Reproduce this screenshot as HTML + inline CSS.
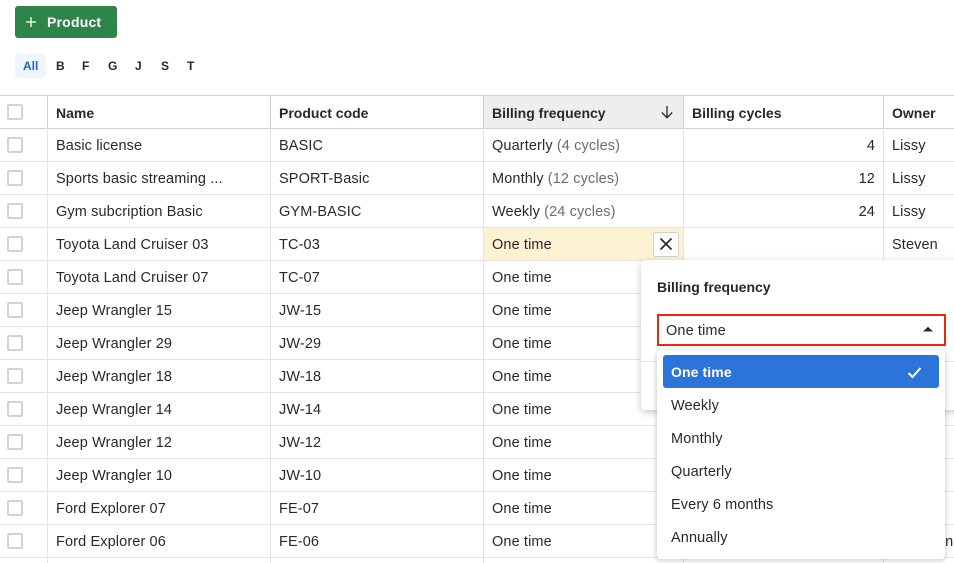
<!DOCTYPE html>
<html><head><meta charset="utf-8">
<style>
html,body{margin:0;padding:0;background:#fff}
#p{position:relative;width:954px;height:563px;overflow:hidden;font-family:"Liberation Sans",sans-serif;font-size:14.5px;color:#26292c;background:#fff}
#p div{position:absolute;box-sizing:border-box}
.h{left:0;width:954px;height:1px;background:#e3e4e5}
.v{width:1px;top:95px;height:468px;background:#e3e4e5}
.t{white-space:nowrap;line-height:22px;letter-spacing:.12px}
.b{font-weight:bold;font-size:14px;letter-spacing:0;line-height:20px}
.c{left:7px;width:16px;height:16px;border:2px solid #d2d3d4;border-radius:2px;background:#fff}
.g{color:#6a6d70}
.n{text-align:right;width:60px;left:815px}
.f{top:57px;font-size:12px;font-weight:bold;letter-spacing:0;line-height:18px}
.o{left:671px}
</style></head><body><div id="p">
<div style="left:15px;top:6px;width:102px;height:32px;background:#2d8549;border-radius:3px"></div>
<svg style="position:absolute;left:25px;top:16px" width="12" height="12" viewBox="0 0 12 12"><path d="M6 1V11M1 6H11" stroke="#fff" stroke-width="1.3" fill="none"/></svg>
<div class="t b" style="left:47px;top:12px;color:#fff;letter-spacing:.2px">Product</div>

<div style="left:15px;top:54px;width:31px;height:24px;background:#eef5fd;border-radius:4px"></div>
<div class="f" style="left:23px;color:#1d68c9">All</div>
<div class="f" style="left:56px">B</div>
<div class="f" style="left:82px">F</div>
<div class="f" style="left:108px">G</div>
<div class="f" style="left:135px">J</div>
<div class="f" style="left:161px">S</div>
<div class="f" style="left:187px">T</div>

<div style="left:484px;top:96px;width:199px;height:32px;background:#eeeeef"></div>
<div style="left:484px;top:228px;width:199px;height:32px;background:#fdf3d3"></div>

<div class="h" style="top:95px;background:#cfd0d1"></div>
<div class="h" style="top:128px;background:#cfd0d1"></div>
<div class="h" style="top:161px"></div><div class="h" style="top:194px"></div>
<div class="h" style="top:227px"></div><div class="h" style="top:260px"></div>
<div class="h" style="top:293px"></div><div class="h" style="top:326px"></div>
<div class="h" style="top:359px"></div><div class="h" style="top:392px"></div>
<div class="h" style="top:425px"></div><div class="h" style="top:458px"></div>
<div class="h" style="top:491px"></div><div class="h" style="top:524px"></div>
<div class="h" style="top:557px"></div>
<div class="v" style="left:47px"></div><div class="v" style="left:270px"></div>
<div class="v" style="left:483px"></div><div class="v" style="left:683px"></div>
<div class="v" style="left:883px"></div>
<div style="left:47px;top:95px;width:1px;height:33px;background:#cfd0d1"></div>
<div style="left:270px;top:95px;width:1px;height:33px;background:#cfd0d1"></div>
<div style="left:483px;top:95px;width:1px;height:33px;background:#cfd0d1"></div>
<div style="left:683px;top:95px;width:1px;height:33px;background:#cfd0d1"></div>
<div style="left:883px;top:95px;width:1px;height:33px;background:#cfd0d1"></div>

<div class="c" style="top:104px"></div><div class="c" style="top:137px"></div><div class="c" style="top:170px"></div>
<div class="c" style="top:203px"></div><div class="c" style="top:236px"></div><div class="c" style="top:269px"></div>
<div class="c" style="top:302px"></div><div class="c" style="top:335px"></div><div class="c" style="top:368px"></div>
<div class="c" style="top:401px"></div><div class="c" style="top:434px"></div><div class="c" style="top:467px"></div>
<div class="c" style="top:500px"></div><div class="c" style="top:533px"></div>

<div class="t b" style="left:56px;top:103px">Name</div>
<div class="t b" style="left:279px;top:103px">Product code</div>
<div class="t b" style="left:492px;top:103px">Billing frequency</div>
<svg style="position:absolute;left:660px;top:105px" width="14" height="14" viewBox="0 0 14 14"><path d="M7 1V12.500M1.800 7.500L7 12.700L12.200 7.500" stroke="#26292c" stroke-width="1.300" fill="none"/></svg>
<div class="t b" style="left:692px;top:103px">Billing cycles</div>
<div class="t b" style="left:892px;top:103px">Owner</div>

<div class="t" style="left:56px;top:135px">Basic license</div><div class="t" style="left:279px;top:135px">BASIC</div><div class="t" style="left:492px;top:135px">Quarterly <span class="g">(4 cycles)</span></div><div class="t n" style="top:135px">4</div><div class="t" style="left:892px;top:135px">Lissy</div>
<div class="t" style="left:56px;top:168px">Sports basic streaming ...</div><div class="t" style="left:279px;top:168px">SPORT-Basic</div><div class="t" style="left:492px;top:168px">Monthly <span class="g">(12 cycles)</span></div><div class="t n" style="top:168px">12</div><div class="t" style="left:892px;top:168px">Lissy</div>
<div class="t" style="left:56px;top:201px">Gym subcription Basic</div><div class="t" style="left:279px;top:201px">GYM-BASIC</div><div class="t" style="left:492px;top:201px">Weekly <span class="g">(24 cycles)</span></div><div class="t n" style="top:201px">24</div><div class="t" style="left:892px;top:201px">Lissy</div>
<div class="t" style="left:56px;top:234px">Toyota Land Cruiser 03</div><div class="t" style="left:279px;top:234px">TC-03</div><div class="t" style="left:492px;top:234px">One time</div><div class="t" style="left:892px;top:234px">Steven</div>
<div class="t" style="left:56px;top:267px">Toyota Land Cruiser 07</div><div class="t" style="left:279px;top:267px">TC-07</div><div class="t" style="left:492px;top:267px">One time</div>
<div class="t" style="left:56px;top:300px">Jeep Wrangler 15</div><div class="t" style="left:279px;top:300px">JW-15</div><div class="t" style="left:492px;top:300px">One time</div>
<div class="t" style="left:56px;top:333px">Jeep Wrangler 29</div><div class="t" style="left:279px;top:333px">JW-29</div><div class="t" style="left:492px;top:333px">One time</div>
<div class="t" style="left:56px;top:366px">Jeep Wrangler 18</div><div class="t" style="left:279px;top:366px">JW-18</div><div class="t" style="left:492px;top:366px">One time</div>
<div class="t" style="left:56px;top:399px">Jeep Wrangler 14</div><div class="t" style="left:279px;top:399px">JW-14</div><div class="t" style="left:492px;top:399px">One time</div>
<div class="t" style="left:56px;top:432px">Jeep Wrangler 12</div><div class="t" style="left:279px;top:432px">JW-12</div><div class="t" style="left:492px;top:432px">One time</div>
<div class="t" style="left:56px;top:465px">Jeep Wrangler 10</div><div class="t" style="left:279px;top:465px">JW-10</div><div class="t" style="left:492px;top:465px">One time</div>
<div class="t" style="left:56px;top:498px">Ford Explorer 07</div><div class="t" style="left:279px;top:498px">FE-07</div><div class="t" style="left:492px;top:498px">One time</div>
<div class="t" style="left:56px;top:531px">Ford Explorer 06</div><div class="t" style="left:279px;top:531px">FE-06</div><div class="t" style="left:492px;top:531px">One time</div>
<div class="t" style="left:937px;top:531px">an</div>

<div style="left:653px;top:232px;width:26px;height:25px;background:#fff;border:1px solid #cfd0d1;border-radius:3px"></div>
<svg style="position:absolute;left:659px;top:237px" width="14" height="14" viewBox="0 0 14 14"><path d="M1.500 1.500L12.500 12.500M12.500 1.500L1.500 12.500" stroke="#26292c" stroke-width="1.700" fill="none"/></svg>

<div style="left:641px;top:260px;width:330px;height:150px;background:#fff;border-radius:4px;box-shadow:0 2px 8px rgba(0,0,0,.22)"></div>
<div style="left:641px;top:361px;width:313px;height:1px;background:#e3e4e5"></div>
<div class="t b" style="left:657px;top:277px">Billing frequency</div>
<div style="left:657px;top:314px;width:289px;height:32px;border:2px solid #f0260a;background:#fff"></div>
<div class="t" style="left:666px;top:320px">One time</div>
<svg style="position:absolute;left:922px;top:326px" width="12" height="6" viewBox="0 0 12 6"><path d="M1 5.500L6 .8L11 5.500Z" fill="#26292c"/></svg>

<div style="left:657px;top:350px;width:288px;height:209px;background:#fff;border-radius:4px;box-shadow:0 1px 6px rgba(0,0,0,.25)"></div>
<div style="left:663px;top:355px;width:276px;height:33px;background:#2b74d9;border-radius:3px"></div>
<div class="t b" style="left:671px;top:362px;color:#fff;letter-spacing:.1px">One time</div>
<svg style="position:absolute;left:907px;top:366px" width="15" height="13" viewBox="0 0 15 13"><path d="M1.500 7L5.500 11L13.500 2" stroke="#fff" stroke-width="2" fill="none"/></svg>
<div class="t o" style="top:395px">Weekly</div>
<div class="t o" style="top:428px">Monthly</div>
<div class="t o" style="top:461px">Quarterly</div>
<div class="t o" style="top:494px">Every 6 months</div>
<div class="t o" style="top:527px">Annually</div>
</div></body></html>
